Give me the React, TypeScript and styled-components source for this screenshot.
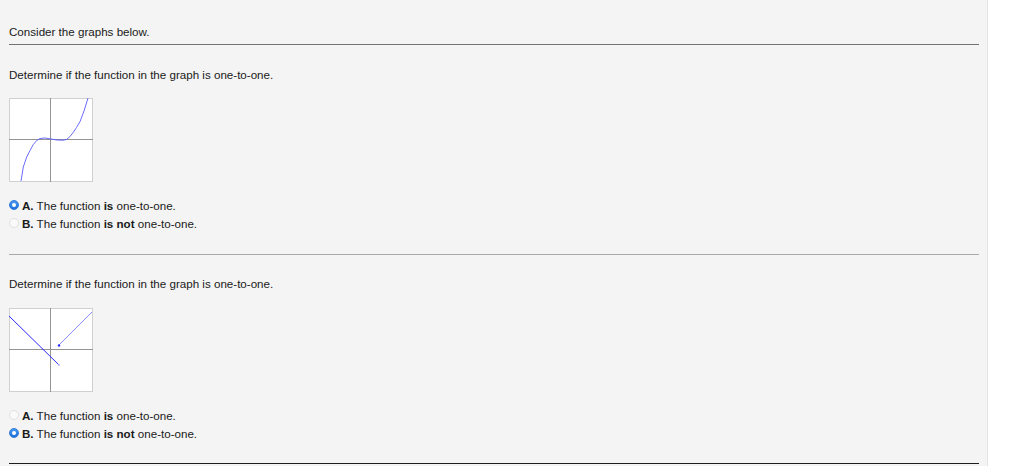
import React from 'react'
import styled, { createGlobalStyle } from 'styled-components'

//Global
const GlobalStyle = createGlobalStyle`
  html, body {
    margin: 0;
    padding: 0;
    background: #ffffff;
  }
  body {
    font-family: 'Liberation Sans', Arial, Helvetica, sans-serif;
    color: #1a1a1a;
  }
`

//Styled Components
const Panel = styled.div`
  width: 970px;
  min-height: 466px;
  box-sizing: content-box;
  padding: 0 8px 0 9px;
  background: #f4f4f4;
  border-right: 1px solid #e4e4e4;
  display: flex;
  flex-direction: column;
`

const Intro = styled.p`
  margin: 25px 0 0;
  font-size: 11.6px;
  line-height: 14px;
`

const Rule = styled.hr<{ $tone: string; $gap: number }>`
  margin: ${(p) => p.$gap}px 0 0;
  border: none;
  height: 1px;
  background: ${(p) => p.$tone};
`

const Question = styled.section<{ $first: boolean }>`
  display: flex;
  flex-direction: column;
  margin-top: ${(p) => (p.$first ? 23 : 22)}px;
`

const Prompt = styled.p`
  margin: 0;
  font-size: 11.6px;
  line-height: 14px;
`

const GraphFrame = styled.svg<{ $gap: number }>`
  display: block;
  margin-top: ${(p) => p.$gap}px;
  width: 84px;
  height: 84px;
`

const OptionList = styled.div`
  display: flex;
  flex-direction: column;
  margin-top: 14px;
`

const Option = styled.label`
  display: flex;
  align-items: center;
  gap: 3px;
  height: 18px;
  font-size: 11.6px;
`

const Radio = styled.span<{ $checked: boolean }>`
  width: 10px;
  height: 10px;
  border-radius: 50%;
  box-sizing: border-box;
  flex: none;
  display: flex;
  align-items: center;
  justify-content: center;
  background: ${(p) => (p.$checked ? 'linear-gradient(#4b9af0, #1f6fd9)' : '#fafafa')};
  border: 1px solid ${(p) => (p.$checked ? '#2a78dc' : '#e2e2e2')};

  &::after {
    content: '';
    display: ${(p) => (p.$checked ? 'block' : 'none')};
    width: 4px;
    height: 4px;
    border-radius: 50%;
    background: #ffffff;
  }
`

const Strong = styled.b`
  font-weight: 700;
`

//Graphs
const GridBox: React.FC<{ gap: number; children: React.ReactNode }> = ({ gap, children }) => (
  <GraphFrame $gap={gap} viewBox="0 0 84 84">
    <rect x="0.5" y="0.5" width="83" height="83" fill="#ffffff" stroke="#d0d0d0" />
    <line x1="41.5" y1="0" x2="41.5" y2="84" stroke="#949494" />
    <line x1="0" y1="41.5" x2="84" y2="41.5" stroke="#949494" />
    {children}
  </GraphFrame>
)

// sampled points of the cubic, in box pixels
const cubicPoints = [
  [12, 83], [14.3, 69], [17.7, 59], [21, 52.5], [24.3, 46.5], [27.7, 42.5], [31, 40.5],
  [36, 40], [42, 41], [48, 42], [54, 42.2], [57.7, 41.5], [61, 38.5], [64.3, 34.3],
  [67.5, 29.5], [71, 23.7], [75, 13], [79, 0],
]

const CubicGraph = () => (
  <GridBox gap={16}>
    <polyline
      points={cubicPoints.map((p) => p.join(',')).join(' ')}
      fill="none"
      stroke="#5a5aff"
      strokeWidth="0.9"
      strokeLinejoin="round"
    />
  </GridBox>
)

const SplitGraph = () => (
  <GridBox gap={17}>
    <line x1="0" y1="8" x2="50" y2="57" stroke="#2a2aff" strokeWidth="1" />
    <circle cx="50" cy="57" r="1" fill="#b7b7ff" />
    <line x1="50" y1="37" x2="83" y2="4" stroke="#8c8cff" strokeWidth="1" />
    <circle cx="50" cy="37.5" r="1.2" fill="#2a2aff" />
  </GridBox>
)

//Data
interface IQuestion {
  graph: React.ReactNode
  answer: 'A' | 'B'
  rule: { tone: string; gap: number }
}

const questions: IQuestion[] = [
  { graph: <CubicGraph />, answer: 'A', rule: { tone: '#a9a9a9', gap: 22 } },
  { graph: <SplitGraph />, answer: 'B', rule: { tone: '#1e1e1e', gap: 21 } },
]

//React Component
const App: React.FC = () => {
  return (
    <>
      <GlobalStyle />
      <Panel>
        <Intro>Consider the graphs below.</Intro>
        <Rule $tone="#737373" $gap={5} />
        {questions.map((q, i) => (
          <React.Fragment key={i}>
            <Question $first={i === 0}>
              <Prompt>Determine if the function in the graph is one-to-one.</Prompt>
              {q.graph}
              <OptionList>
                <Option>
                  <Radio $checked={q.answer === 'A'} />
                  <span>
                    <Strong>A.</Strong> The function <Strong>is</Strong> one-to-one.
                  </span>
                </Option>
                <Option>
                  <Radio $checked={q.answer === 'B'} />
                  <span>
                    <Strong>B.</Strong> The function <Strong>is not</Strong> one-to-one.
                  </span>
                </Option>
              </OptionList>
            </Question>
            <Rule $tone={q.rule.tone} $gap={q.rule.gap} />
          </React.Fragment>
        ))}
      </Panel>
    </>
  )
}
export default App
